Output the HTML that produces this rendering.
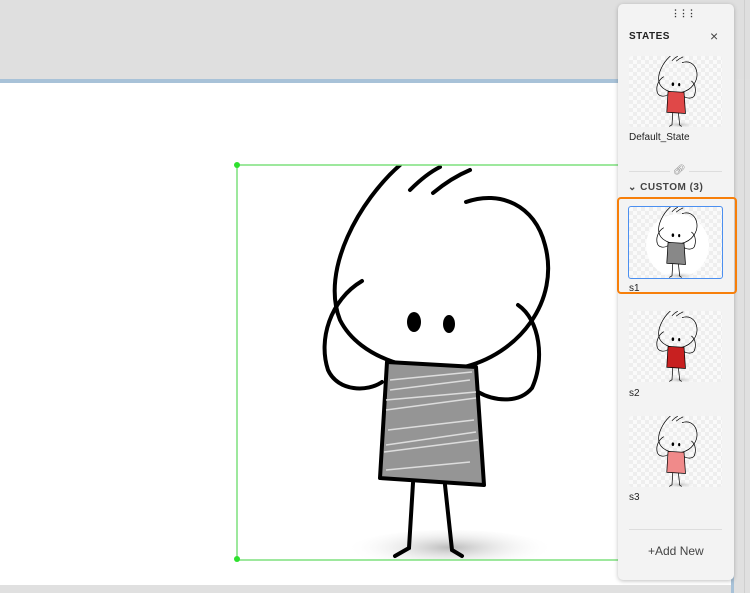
<!DOCTYPE html>
<html><head><style>
body{margin:0;width:750px;height:593px;overflow:hidden;background:#e0e0e0;font-family:"Liberation Sans",sans-serif;position:relative}
.top{position:absolute;left:0;top:0;width:750px;height:79px;background:#dfdfdf}
.blue{position:absolute;left:0;top:79px;width:733px;height:4px;background:#a8c2d8}
.canvas{position:absolute;left:0;top:83px;width:731px;height:502px;background:#fff}
.vblue{position:absolute;left:731px;top:79px;width:3px;height:514px;background:#a8c2d8}
.rstrip{position:absolute;left:744px;top:0;width:1px;height:593px;background:#cfcfcf}
.panel{position:absolute;left:618px;top:4px;width:116px;height:576px;background:#f3f3f3;border-radius:5px;box-shadow:0 1px 4px rgba(0,0,0,.25)}
.abs{position:absolute}
.thumb{position:absolute;left:11px;width:93px;height:71px;border-radius:3px;overflow:hidden;background-color:#fafafa;background-image:linear-gradient(45deg,#eee 25%,transparent 25%,transparent 75%,#eee 75%),linear-gradient(45deg,#eee 25%,transparent 25%,transparent 75%,#eee 75%);background-size:8px 8px;background-position:0 0,4px 4px}
.lbl{position:absolute;left:11px;font-size:10px;color:#222}
</style></head><body>
<div class="top"></div><div class="blue"></div><div class="canvas"></div><div class="vblue"></div><div class="rstrip"></div>
<svg class="abs" style="left:0;top:0" width="750" height="593">
<defs>
<radialGradient id="sh" cx="0.5" cy="0.4" r="0.5"><stop offset="0" stop-color="#bbb"/><stop offset="1" stop-color="#fff" stop-opacity="0"/></radialGradient>
<clipPath id="cp"><rect x="237" y="165" width="383" height="395"/></clipPath>
<g id="fig">
<ellipse cx="450" cy="552" rx="105" ry="22" fill="url(#sh)"/>
<path d="M400 165 C360 200,320 270,340 320 C360 360,420 375,460 368 C520 355,560 300,545 245 C535 205,500 190,466 202" fill="none" stroke="#000" stroke-width="4" stroke-linecap="round"/>
<path d="M410 190 C420 180,430 172,440 167 M433 193 C445 183,458 175,470 170" fill="none" stroke="#000" stroke-width="4" stroke-linecap="round"/>
<path d="M362 281 C330 300,318 340,328 370 C338 392,368 392,382 382" fill="none" stroke="#000" stroke-width="4" stroke-linecap="round"/>
<path d="M518 305 C540 320,545 360,532 388 C518 405,492 400,478 392" fill="none" stroke="#000" stroke-width="4" stroke-linecap="round"/>
<path d="M413 483 L409 548 L395 556 M445 485 L452 550 L462 556" fill="none" stroke="#000" stroke-width="4" stroke-linecap="round"/>
<ellipse cx="414" cy="322" rx="7" ry="10"/><ellipse cx="449" cy="324" rx="6" ry="9"/>
</g>
</defs>
<g clip-path="url(#cp)"><use href="#fig"/>
<path d="M387 362 L476 367 L484 485 L380 478 Z" fill="#959595" stroke="#000" stroke-width="4" stroke-linejoin="round"/>
<path d="M390 380 L472 372 M390 390 L470 380 M386 400 L476 392 M386 410 L476 398 M388 430 L474 420 M386 445 L476 432 M384 452 L478 440 M386 470 L470 462" stroke="#ddd" stroke-width="1.5"/>
</g>
<rect x="237" y="165" width="383" height="395" fill="none" stroke="#7de07d" stroke-width="1.5"/>
<circle cx="237" cy="165" r="3" fill="#2ee02e"/><circle cx="237" cy="559" r="3" fill="#2ee02e"/>
</svg>
<div class="panel">
<div class="abs" style="left:53px;top:4px;font-size:9px;font-weight:bold;color:#333;letter-spacing:-1px">⋮⋮⋮</div>
<div class="abs" style="left:11px;top:27px;font-size:10px;font-weight:bold;letter-spacing:.5px;color:#222">STATES</div>
<div class="abs" style="left:92px;top:24px;font-size:14px;color:#444">×</div>
<div class="thumb" style="top:52px"><svg width="93" height="71" viewBox="237 165 383 395"><use href="#fig"/><path d="M387 362 L476 367 L484 485 L380 478 Z" fill="#e04848" stroke="#000" stroke-width="4"/></svg></div>
<div class="lbl" style="top:128px">Default_State</div>
<div class="abs" style="left:11px;top:167px;width:93px;height:1px;background:#ddd"></div>
<div class="abs" style="left:52px;top:161px;background:#f3f3f3;padding:0 3px;font-size:10px;color:#888">🔗︎</div>
<div class="abs" style="left:10px;top:178px;font-size:10px;font-weight:bold;color:#444;letter-spacing:.5px">⌄ CUSTOM (3)</div>
<div class="abs" style="left:-1px;top:193px;width:116px;height:93px;border:2px solid #f77f0a;border-radius:4px"></div>
<div class="thumb" style="top:202px;border:1px solid #4b8ff0;left:10px"><svg width="93" height="71" viewBox="237 165 383 395"><circle cx="440" cy="380" r="175" fill="#fff"/><use href="#fig"/><path d="M387 362 L476 367 L484 485 L380 478 Z" fill="#888" stroke="#000" stroke-width="4"/></svg></div>
<div class="lbl" style="top:279px">s1</div>
<div class="thumb" style="top:307px"><svg width="93" height="71" viewBox="237 165 383 395"><use href="#fig"/><path d="M387 362 L476 367 L484 485 L380 478 Z" fill="#c82020" stroke="#000" stroke-width="4"/></svg></div>
<div class="lbl" style="top:384px">s2</div>
<div class="thumb" style="top:412px"><svg width="93" height="71" viewBox="237 165 383 395"><use href="#fig"/><path d="M387 362 L476 367 L484 485 L380 478 Z" fill="#f08a8a" stroke="#000" stroke-width="4"/></svg></div>
<div class="lbl" style="top:488px">s3</div>
<div class="abs" style="left:11px;top:525px;width:93px;height:1px;background:#ddd"></div>
<div class="abs" style="left:30px;top:540px;font-size:12px;color:#444">+Add New</div>
</div>
</body></html>
